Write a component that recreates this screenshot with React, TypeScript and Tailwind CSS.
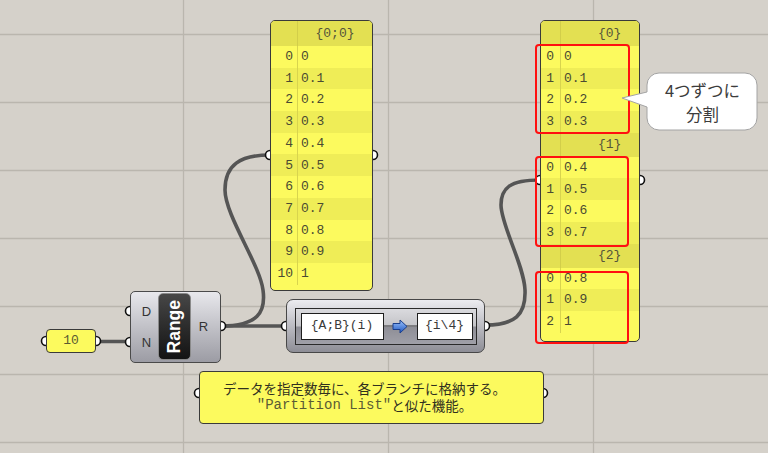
import React from "react";

const MONO = "font-['Liberation_Mono','Noto_Sans_CJK_JP',monospace]";
const JP = "font-['Noto_Sans_CJK_JP',sans-serif]";

function Header({ label, idxCls, textCls, hCls }: { label: string; idxCls: string; textCls: string; hCls: string }) {
  return (
    <div className={`flex ${hCls} bg-[#e3e052] shrink-0`}>
      <div className={`${idxCls} border-r border-[#d2ce4a]`} />
      <div className={`flex-1 flex items-center ${textCls} text-[#55553a]`}>{label}</div>
    </div>
  );
}

function Row({ idx, val, odd, idxCls }: { idx: string; val: string; odd: boolean; idxCls: string }) {
  return (
    <div className={`flex h-[21.7px] shrink-0 ${odd ? "bg-[#efed57]" : "bg-[#fcfa5e]"}`}>
      <div className={`${idxCls} border-r border-[#d8d44e] flex items-center justify-end`}>{idx}</div>
      <div className="flex-1 flex items-center pl-[3px]">{val}</div>
    </div>
  );
}

const grips: [number, number][] = [
  [46, 341],
  [96, 341],
  [130, 311],
  [130, 342],
  [221, 326],
  [286, 326],
  [485, 326],
  [270, 155],
  [373, 155],
  [540, 180],
  [640, 180],
  [199, 393],
  [543, 393],
];

export default function App() {
  const p1 = ["0", "0.1", "0.2", "0.3", "0.4", "0.5", "0.6", "0.7", "0.8", "0.9", "1"];
  const idx1 = "w-[27px] pr-[4px]";
  const idx2 = "w-[20px] pr-[6px]";
  return (
    <div className="relative w-[768px] h-[453px] overflow-hidden bg-[#d5d1ca]">
      <svg className="absolute inset-0" width="768" height="453" viewBox="0 0 768 453">
        {[34, 102, 170, 238, 306, 374, 442].map((y) => (
          <line key={"h" + y} x1="0" x2="768" y1={y + 0.5} y2={y + 0.5} stroke="#bab6ae" strokeWidth="1.3" />
        ))}
        {[183, 388, 593].map((x) => (
          <line key={"v" + x} y1="0" y2="453" x1={x + 0.5} x2={x + 0.5} stroke="#bab6ae" strokeWidth="1.3" />
        ))}
        <g fill="none" stroke="#555555" strokeWidth="3.6" strokeLinecap="round">
          <path d="M96 341.5 L130 341.5" />
          <path d="M221 326 L286 326" />
          <path d="M221 326 C 258 326, 266 312, 263 290 C 260 265, 225 215, 225 190 C 225 165, 240 155, 270 155" />
          <path d="M485 325 C 515 325, 526 315, 525 290 C 524 265, 501 225, 501 205 C 501 188, 510 180, 540 180" />
        </g>
        {grips.map(([x, y], i) => (
          <circle key={i} cx={x} cy={y} r="4.5" fill="#ffffff" stroke="#111111" strokeWidth="1.6" />
        ))}
      </svg>

      {/* Panel 1 */}
      <div
        className={`absolute left-[270px] top-[20px] w-[103px] h-[271px] rounded-[5px] border border-[#3a3a3a] bg-[#fcfa5e] overflow-hidden flex flex-col ${MONO} text-[13px] text-[#4a4a32]`}
      >
        <Header label="{0;0}" idxCls={idx1} textCls="justify-center" hCls="h-[25px]" />
        {p1.map((v, i) => (
          <Row key={i} idx={String(i)} val={v} odd={i % 2 === 1} idxCls={idx1} />
        ))}
      </div>

      {/* Panel 2 */}
      <div
        className={`absolute left-[540px] top-[20px] w-[100px] h-[322px] rounded-[5px] border border-[#3a3a3a] bg-[#fcfa5e] overflow-hidden flex flex-col ${MONO} text-[13px] text-[#4a4a32]`}
      >
        <Header label="{0}" idxCls={idx2} textCls="pl-[37px]" hCls="h-[25px]" />
        {["0", "0.1", "0.2", "0.3"].map((v, i) => (
          <Row key={"a" + i} idx={String(i)} val={v} odd={i % 2 === 1} idxCls={idx2} />
        ))}
        <Header label="{1}" idxCls={idx2} textCls="pl-[37px]" hCls="h-[24px]" />
        {["0.4", "0.5", "0.6", "0.7"].map((v, i) => (
          <Row key={"b" + i} idx={String(i)} val={v} odd={i % 2 === 1} idxCls={idx2} />
        ))}
        <Header label="{2}" idxCls={idx2} textCls="pl-[37px]" hCls="h-[24px]" />
        {["0.8", "0.9", "1"].map((v, i) => (
          <Row key={"c" + i} idx={String(i)} val={v} odd={i % 2 === 1} idxCls={idx2} />
        ))}
      </div>

      {/* Red highlight boxes */}
      <div className="absolute left-[535px] top-[44px] w-[95px] h-[90px] rounded-[4px] border-2 border-[#ff1010]" />
      <div className="absolute left-[535px] top-[156px] w-[94px] h-[91px] rounded-[4px] border-2 border-[#ff1010]" />
      <div className="absolute left-[535px] top-[271px] w-[94px] h-[73px] rounded-[4px] border-2 border-[#ff1010]" />

      {/* Callout bubble */}
      <div className="absolute left-[621px] top-[72px] w-[137px] h-[59px]">
        <svg className="absolute inset-0" width="137" height="59" viewBox="0 0 137 59">
          <path
            d="M38 1 H124 A12 12 0 0 1 136 13 V46 A12 12 0 0 1 124 58 H38 A12 12 0 0 1 26 46 V35 L1 26 L26 20 V13 A12 12 0 0 1 38 1 Z"
            fill="#ffffff"
            stroke="#a4a4a4"
            strokeWidth="1"
          />
        </svg>
        <div className={`absolute left-[26px] right-0 top-0 bottom-0 flex flex-col items-center justify-center ${JP} text-[16.5px] leading-[24px] text-[#3c3c3c]`}>
          <span>4つずつに</span>
          <span>分割</span>
        </div>
      </div>

      {/* Number panel "10" */}
      <div
        className={`absolute left-[46px] top-[329px] w-[50px] h-[24px] rounded-[4px] border border-[#3a3a3a] bg-[#fcfa5e] flex items-center justify-center ${MONO} text-[13px] text-[#5a5a32]`}
      >
        10
      </div>

      {/* Range component */}
      <div className="absolute left-[130px] top-[291px] w-[91px] h-[72px] rounded-[5px] border border-[#4a4a4a] bg-gradient-to-b from-[#e8e8ec] to-[#9c9ca4] flex font-['Liberation_Sans',sans-serif] text-[13px] text-[#333333]">
        <div className="w-[27px] flex flex-col justify-center gap-[15px] pl-[4px]">
          <div className="h-[16px] flex items-center justify-center">D</div>
          <div className="h-[16px] flex items-center justify-center">N</div>
        </div>
        <div className="w-[33px] h-[67px] mt-[1px] rounded-[5px] border border-[#8a8a8a] bg-gradient-to-b from-[#474747] to-[#141414] flex items-center justify-center">
          <span className="-rotate-90 text-white font-bold text-[17.5px] leading-none whitespace-nowrap">Range</span>
        </div>
        <div className="flex-1 flex items-center justify-center pr-[4px]">R</div>
      </div>

      {/* Path mapper component */}
      <div className="absolute left-[286px] top-[299px] w-[199px] h-[54px] rounded-[7px] border border-[#474747] bg-gradient-to-b from-[#ececf0] to-[#8e8e96] flex items-center justify-center">
        <div className="w-[182px] h-[37px] border border-[#2a2a2a] bg-[linear-gradient(to_bottom,#dadade_0%,#c4c4c8_48%,#8e8e96_52%,#a0a0a8_100%)] flex items-center pl-[5px] pr-[3px]">
          <div className={`w-[83px] h-[27px] border-[1.5px] border-[#1e1e1e] bg-white flex items-center justify-center ${MONO} text-[13px] text-[#3a3a3a]`}>
            {"{A;B}(i)"}
          </div>
          <div className="flex-1 h-[27px] relative flex items-center">
            <div className="absolute left-0 right-0 top-[12px] h-[2px] bg-[#7c7c80]" />
            <svg className="absolute left-[8px] top-[6px]" width="16" height="15" viewBox="0 0 16 15">
              <defs>
                <linearGradient id="ag" x1="0" y1="0" x2="0" y2="1">
                  <stop offset="0" stopColor="#9cc4ff" />
                  <stop offset="1" stopColor="#1e56c0" />
                </linearGradient>
              </defs>
              <path d="M1 4.5 H8 V1 L15 7.5 L8 14 V10.5 H1 Z" fill="url(#ag)" stroke="#1a3f8c" strokeWidth="1" strokeLinejoin="round" />
            </svg>
          </div>
          <div className={`w-[56px] h-[27px] border-[1.5px] border-[#1e1e1e] bg-white flex items-center justify-center ${MONO} text-[13px] text-[#3a3a3a]`}>
            {"{i\\4}"}
          </div>
        </div>
      </div>

      {/* Scribble panel */}
      <div className="absolute left-[199px] top-[371px] w-[345px] h-[53px] rounded-[4px] border border-[#3a3a3a] bg-[#fcfa5e] flex flex-col items-center justify-center pr-[14px] pb-[2px] text-[#30301e]">
        <div className={`${JP} text-[13.5px] leading-[17px] h-[17px]`}>データを指定数毎に、各ブランチに格納する。</div>
        <div className="flex items-center h-[17px] leading-[17px]">
          <span className={`${MONO} text-[14px] text-[#5a5a34]`}>"Partition List"</span>
          <span className={`${JP} text-[13.5px]`}>と似た機能。</span>
        </div>
      </div>
    </div>
  );
}
